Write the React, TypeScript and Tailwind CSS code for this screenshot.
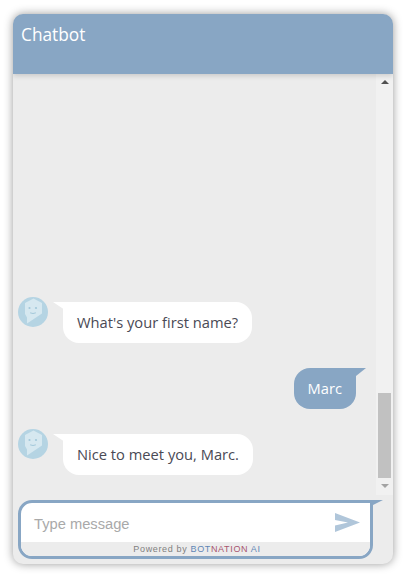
const openSans = { fontFamily: '"Open Sans", sans-serif' };

function BotAvatar() {
  return (
    <svg width="30" height="30" viewBox="0 0 30 30" className="shrink-0">
      <circle cx="15" cy="15" r="15" fill="#b5d4e3" />
      <path d="M15.5 1.5 L24 6 V16.5 L9 26.5 V20.5 L7 17 V6 Z" fill="#d6e8f0" />
      <circle cx="11.5" cy="11" r="1.1" fill="#a3c8da" />
      <circle cx="18" cy="11" r="1.1" fill="#a3c8da" />
      <path d="M12.5 16 Q15 17.2 17.5 16" stroke="#a3c8da" strokeWidth="1" fill="none" strokeLinecap="round" />
    </svg>
  );
}

function BotMessage({ text }: { text: string }) {
  return (
    <div className="flex items-start pl-[5px] mt-[-5px]">
      <BotAvatar />
      <div className="relative ml-[15px] mt-[5px] rounded-[16px] rounded-tl-none bg-white px-[14px] h-[41px] flex items-center text-[14.7px] text-[#4a4a55]">
        <svg width="12" height="8" viewBox="0 0 12 8" className="absolute left-[-10px] top-0">
          <path d="M0 0 H12 V8 Z" fill="#ffffff" />
        </svg>
        {text}
      </div>
    </div>
  );
}

function UserMessage({ text }: { text: string }) {
  return (
    <div className="flex justify-end pr-[20px]">
      <div className="relative rounded-[16px] rounded-tr-none bg-[#88a6c4] px-[14px] h-[41px] flex items-center text-[14.7px] text-white">
        <svg width="10" height="8" viewBox="0 0 10 8" className="absolute right-[-10px] top-0">
          <path d="M0 0 H10 L0 8 Z" fill="#88a6c4" />
        </svg>
        {text}
      </div>
    </div>
  );
}

export default function App() {
  return (
    <div className="w-[412px] h-[576px] bg-white pl-[13px] pt-[14px]" style={openSans}>
      <div className="w-[380px] h-[550px] rounded-[10px] bg-[#ececec] overflow-hidden flex flex-col shadow-[0_0_10px_rgba(0,0,0,0.4)]">
        <div className="relative z-10 h-[60px] shrink-0 bg-[#88a6c4] px-[8px] pt-[8px] text-[17.3px] leading-[26px] text-white shadow-[0_2px_5px_rgba(0,0,0,0.15)]">
          Chatbot
        </div>

        <div className="flex flex-1 min-h-0">
          <div className="flex-1 flex flex-col justify-end pb-[20px] gap-[25px]">
            <BotMessage text="What's your first name?" />
            <UserMessage text="Marc" />
            <BotMessage text="Nice to meet you, Marc." />
          </div>
          <div className="w-[17px] shrink-0 bg-[#f1f1f1] flex flex-col items-center px-[2px] pt-[6px]">
            <div className="h-0 w-0 border-x-[4px] border-b-[4px] border-x-transparent border-b-[#505050]" />
            <div className="flex-1" />
            <div className="h-[85px] w-full bg-[#c1c1c1]" />
            <div className="mt-[6px] mb-[7px] h-0 w-0 border-x-[4px] border-t-[4px] border-x-transparent border-t-[#a3a3a3]" />
          </div>
        </div>

        <div className="shrink-0 pl-[5px] pr-[20px] pb-[5px] pt-[5px]">
          <div className="relative h-[59px] rounded-[14px] rounded-tr-none border-[3px] border-[#88a6c4] bg-white flex flex-col">
            <svg width="12" height="6" viewBox="0 0 12 6" className="absolute right-[-13px] top-[-3px]">
              <path d="M0 0 H12 L0 6 Z" fill="#88a6c4" />
            </svg>
            <div className="flex-1 flex items-center justify-between pl-[13px] pr-[10px] pt-[3px]">
              <span className="text-[14.7px] text-[#a9a9a9]" style={{ fontFamily: '"Liberation Sans", sans-serif' }}>
                Type message
              </span>
              <svg width="25" height="19" viewBox="0 0 25 19" className="mt-[-3px]">
                <path d="M0 0 L25 9.5 L0 19 V12.5 L13 9.5 L0 7 Z" fill="#b0c6da" />
              </svg>
            </div>
            <div
              className="h-[14px] rounded-b-[11px] bg-[#ececec] pl-[3px] text-center text-[9px] leading-[15px] tracking-[0.65px] text-[#808080]"
              style={{ fontFamily: '"Liberation Sans", sans-serif' }}
            >
              Powered by <span className="text-[#5f86b5]">BOT</span>
              <span className="text-[#a8556f]">NATION</span> <span className="text-[#5f86b5]">AI</span>
            </div>
          </div>
        </div>
      </div>
    </div>
  );
}
